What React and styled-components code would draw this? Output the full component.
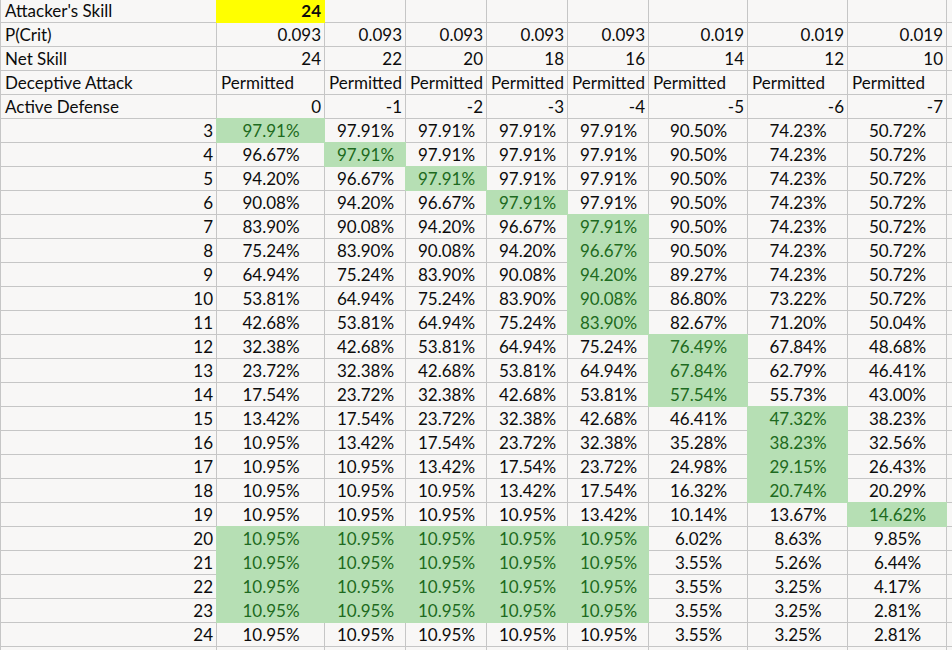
import styled, { createGlobalStyle } from "styled-components";

const GlobalStyle = createGlobalStyle`
  html, body {
    margin: 0;
    padding: 0;
    background: #f8f7f6;
    overflow: hidden;
  }
`;

const Page = styled.div`
  width: 952px;
  height: 650px;
  overflow: hidden;
  background: #f8f7f6;
`;

const Sheet = styled.div`
  display: grid;
  grid-template-columns: 215px 107px 80px 80px 80px 80px 98px 99px 98px 100px;
  grid-auto-rows: 23px;
  gap: 1px;
  padding-left: 1px;
  margin-top: -1px;
  background: #c6c6c6;
  font-family: Lato, "Open Sans", "Liberation Sans", sans-serif;
  font-size: 17px;
  color: #0c0c0c;
`;

const fills = {
  good: "#b6dfb4",
  key: "#ffff00",
};

const Cell = styled.div`
  position: relative;
  background: ${(p) => fills[p.$fill] || "#f8f7f6"};
  box-shadow: ${(p) => (p.$fill ? `0 0 0 1px ${fills[p.$fill]}` : "none")};
  color: ${(p) => (p.$fill === "good" ? "#1d6a20" : "#0c0c0c")};
  font-weight: ${(p) => (p.$bold ? 700 : 400)};
  text-align: ${(p) => p.$align || "left"};
  line-height: 23px;
  padding: 0 3px 0 4px;
  white-space: nowrap;
  overflow: hidden;
`;

const params = {
  crit: ["0.093", "0.093", "0.093", "0.093", "0.093", "0.019", "0.019", "0.019"],
  net: [24, 22, 20, 18, 16, 14, 12, 10],
  defense: [0, -1, -2, -3, -4, -5, -6, -7],
};

// [defense roll, values per column, index of highlighted columns]
const rows = [
  [3, ["97.91", "97.91", "97.91", "97.91", "97.91", "90.50", "74.23", "50.72"], [0]],
  [4, ["96.67", "97.91", "97.91", "97.91", "97.91", "90.50", "74.23", "50.72"], [1]],
  [5, ["94.20", "96.67", "97.91", "97.91", "97.91", "90.50", "74.23", "50.72"], [2]],
  [6, ["90.08", "94.20", "96.67", "97.91", "97.91", "90.50", "74.23", "50.72"], [3]],
  [7, ["83.90", "90.08", "94.20", "96.67", "97.91", "90.50", "74.23", "50.72"], [4]],
  [8, ["75.24", "83.90", "90.08", "94.20", "96.67", "90.50", "74.23", "50.72"], [4]],
  [9, ["64.94", "75.24", "83.90", "90.08", "94.20", "89.27", "74.23", "50.72"], [4]],
  [10, ["53.81", "64.94", "75.24", "83.90", "90.08", "86.80", "73.22", "50.72"], [4]],
  [11, ["42.68", "53.81", "64.94", "75.24", "83.90", "82.67", "71.20", "50.04"], [4]],
  [12, ["32.38", "42.68", "53.81", "64.94", "75.24", "76.49", "67.84", "48.68"], [5]],
  [13, ["23.72", "32.38", "42.68", "53.81", "64.94", "67.84", "62.79", "46.41"], [5]],
  [14, ["17.54", "23.72", "32.38", "42.68", "53.81", "57.54", "55.73", "43.00"], [5]],
  [15, ["13.42", "17.54", "23.72", "32.38", "42.68", "46.41", "47.32", "38.23"], [6]],
  [16, ["10.95", "13.42", "17.54", "23.72", "32.38", "35.28", "38.23", "32.56"], [6]],
  [17, ["10.95", "10.95", "13.42", "17.54", "23.72", "24.98", "29.15", "26.43"], [6]],
  [18, ["10.95", "10.95", "10.95", "13.42", "17.54", "16.32", "20.74", "20.29"], [6]],
  [19, ["10.95", "10.95", "10.95", "10.95", "13.42", "10.14", "13.67", "14.62"], [7]],
  [20, ["10.95", "10.95", "10.95", "10.95", "10.95", "6.02", "8.63", "9.85"], [0, 1, 2, 3, 4]],
  [21, ["10.95", "10.95", "10.95", "10.95", "10.95", "3.55", "5.26", "6.44"], [0, 1, 2, 3, 4]],
  [22, ["10.95", "10.95", "10.95", "10.95", "10.95", "3.55", "3.25", "4.17"], [0, 1, 2, 3, 4]],
  [23, ["10.95", "10.95", "10.95", "10.95", "10.95", "3.55", "3.25", "2.81"], [0, 1, 2, 3, 4]],
  [24, ["10.95", "10.95", "10.95", "10.95", "10.95", "3.55", "3.25", "2.81"], []],
];

const HeaderRow = ({ label, values, align = "right" }) => (
  <>
    <Cell>{label}</Cell>
    {values.map((v, i) => (
      <Cell key={i} $align={align}>
        {v}
      </Cell>
    ))}
    <Cell />
  </>
);

const App = () => {
  return (
    <Page>
      <GlobalStyle />
      <Sheet>
        <Cell>Attacker's Skill</Cell>
        <Cell $align="right" $fill="key" $bold>
          24
        </Cell>
        {Array.from({ length: 8 }).map((_, i) => (
          <Cell key={i} />
        ))}
        <HeaderRow label="P(Crit)" values={params.crit} />
        <HeaderRow label="Net Skill" values={params.net} />
        <HeaderRow label="Deceptive Attack" values={Array(8).fill("Permitted")} align="left" />
        <HeaderRow label="Active Defense" values={params.defense} />
        {rows.map(([roll, values, good]) => (
          <>
            <Cell key={`r${roll}`} $align="right">
              {roll}
            </Cell>
            {values.map((v, i) => (
              <Cell key={`${roll}-${i}`} $align="center" $fill={good.includes(i) ? "good" : undefined}>
                {v}%
              </Cell>
            ))}
            <Cell key={`e${roll}`} />
          </>
        ))}
        {Array.from({ length: 10 }).map((_, i) => (
          <Cell key={`tail${i}`} />
        ))}
      </Sheet>
    </Page>
  );
};

export default App;
